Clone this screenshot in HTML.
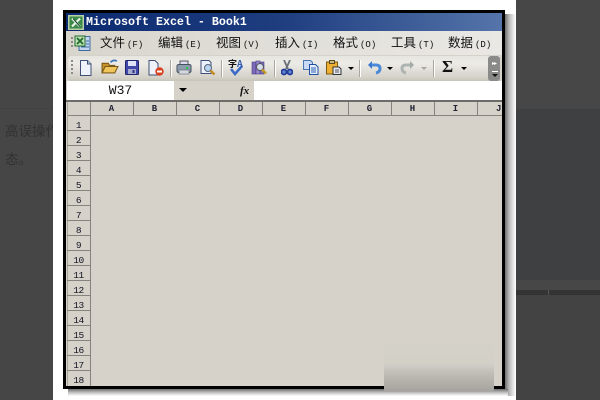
<!DOCTYPE html>
<html><head><meta charset="utf-8">
<style>
html,body{margin:0;padding:0;width:600px;height:400px;overflow:hidden;background:#454545}
div,span,svg{position:absolute}
body{font-family:"Liberation Sans","Noto Sans CJK SC",sans-serif}
.m{top:34px;font:12.500px/18px "Liberation Serif","Noto Sans CJK SC",sans-serif;color:#111;white-space:nowrap}
.m i{font:9px/18px "Liberation Mono",monospace;font-style:normal;margin-left:2px}
.c{top:102px;height:14px;width:43px;text-align:center;font:bold 9px/15px "Liberation Mono",monospace;color:#223;}
.cl{top:102px;width:1px;height:14px;background:#85837d}
.r{left:67px;width:23px;height:14px;border-bottom:1px solid #85837d;text-align:center;font:9.500px/20px "Liberation Mono",monospace;letter-spacing:-.5px;color:#112;overflow:hidden}
.s{top:60px;width:1px;height:17px;background:#a9a79f;border-right:1px solid #fff}
.a{top:67px;width:0;height:0;border-left:3px solid transparent;border-right:3px solid transparent;border-top:3px solid #000}
.g{width:2px;height:2px;background:#8c8a84}
</style></head><body>
<!-- background -->
<div style="left:0;top:0;width:53px;height:400px;background:#464646"></div>
<div style="left:0;top:108px;width:53px;height:1px;background:#424242"></div>
<div style="left:5px;top:123px;width:48px;height:18px;overflow:hidden;font-size:13.500px;line-height:18px;color:#313131;white-space:nowrap">高误操作</div>
<div style="left:5px;top:151px;width:30px;height:18px;overflow:hidden;font-size:13.500px;line-height:18px;color:#313131;white-space:nowrap">态。</div>
<div style="left:516px;top:0;width:84px;height:109px;background:#474747"></div>
<div style="left:516px;top:109px;width:84px;height:171px;background:#3f4042"></div>
<div style="left:516px;top:280px;width:84px;height:10px;background:#474747"></div>
<div style="left:516px;top:290px;width:84px;height:5px;background:#343434"></div>
<div style="left:548px;top:290px;width:1px;height:5px;background:#555"></div>
<div style="left:516px;top:295px;width:84px;height:105px;background:#434343"></div>
<!-- white panel -->
<div style="left:53px;top:0;width:463px;height:400px;background:#fff"></div>
<!-- shadows -->
<div style="left:505px;top:14px;width:11px;height:382px;background:linear-gradient(90deg,#6e6e6e,#b5b5b5 35%,#f2f2f2 85%,#fff)"></div>
<div style="left:68px;top:389px;width:440px;height:7px;background:linear-gradient(180deg,#6e6e6e,#c0c0c0 50%,#fff)"></div>
<!-- window -->
<div style="left:63px;top:10px;width:442px;height:379px;background:#000"></div>
<div style="left:66px;top:13px;width:436px;height:373px;background:#d6d2ca;overflow:hidden"></div>
<!-- title -->
<div style="left:66px;top:13px;width:436px;height:18px;background:linear-gradient(90deg,#0c2a70,#1e3e80 50%,#5474aa)"></div>
<svg style="left:68px;top:15px" width="16" height="15" viewBox="0 0 16 15"><rect width="16" height="15" fill="#b8d0a8"/><rect x="1.500" y="1.500" width="13" height="12" fill="#3d8a48"/><path d="M4 3.500l8 8M12 3.500l-8 8" stroke="#eef6ea" stroke-width="2.200"/><path d="M5 3.500l7 8" stroke="#143" stroke-width="1"/></svg>
<div style="left:86px;top:14px;font:bold 11.670px/17px 'Liberation Mono',monospace;color:#fff;white-space:pre">Microsoft Excel - Book1</div>
<!-- menu -->
<div style="left:66px;top:31px;width:436px;height:24px;background:linear-gradient(90deg,#d8d5cd,#e9e8e4)"></div>
<div class="g" style="left:71px;top:37px"></div><div class="g" style="left:71px;top:41px"></div><div class="g" style="left:71px;top:45px"></div>
<svg style="left:74px;top:35px" width="18" height="17" viewBox="0 0 18 17"><path d="M5 1.500h11v14H5z" fill="#c4d6ee" stroke="#3d6aa0"/><rect x="1" y="1" width="10" height="10" fill="#bfe0b4" stroke="#1f6a2c"/><path d="M3 3l6 6M9 3l-6 6" stroke="#1f6a2c" stroke-width="1.800"/><path d="M12 6h3M12 9h3M7 12h8" stroke="#3c6ca8"/></svg>
<div class="m" style="left:100px">文件<i>(F)</i></div>
<div class="m" style="left:158px">编辑<i>(E)</i></div>
<div class="m" style="left:216px">视图<i>(V)</i></div>
<div class="m" style="left:275px">插入<i>(I)</i></div>
<div class="m" style="left:333px">格式<i>(O)</i></div>
<div class="m" style="left:391px">工具<i>(T)</i></div>
<div class="m" style="left:448px">数据<i>(D)</i></div>
<!-- toolbar -->
<div style="left:68px;top:56px;width:432px;height:25px;border-radius:3px 0 0 3px;background:linear-gradient(180deg,#e6e5df,#ecebe6 30%,#d4d2c9 85%,#c6c3b9)"></div>
<div class="g" style="left:71px;top:60px"></div><div class="g" style="left:71px;top:64px"></div><div class="g" style="left:71px;top:68px"></div><div class="g" style="left:71px;top:72px"></div>
<svg style="left:79px;top:60px" width="13" height="16" viewBox="0 0 12 16"><path d="M1 .5h7l3.500 3.500v11.500H1z" fill="#eef2fa" stroke="#3f4f78"/><path d="M8 .5v3.500h3.500" fill="#b8c6e0" stroke="#3f4f78"/></svg>
<svg style="left:101px;top:58px" width="18" height="17" viewBox="0 0 17 16"><path d="M1 5h6l1 2h5v7H1z" fill="#c8922a" stroke="#7a5a18"/><path d="M1 14l3-6h12l-3 6z" fill="#f0c65c" stroke="#7a5a18"/><path d="M9 4q3-3 6-1" fill="none" stroke="#3c74b8" stroke-width="1.600"/></svg>
<svg style="left:125px;top:60px" width="14" height="15" viewBox="0 0 14 15"><rect x=".5" y=".5" width="13" height="14" rx="1" fill="#4048a8" stroke="#20246a"/><rect x="3" y="1" width="8" height="5" fill="#dfe4f6"/><rect x="3" y="9" width="8" height="5" fill="#a8add0"/><rect x="7.500" y="10" width="2" height="3" fill="#2c3080"/></svg>
<svg style="left:148px;top:60px" width="16" height="16" viewBox="0 0 16 16"><path d="M1 .5h6l3 3v11.500H1z" fill="#eef2fa" stroke="#3f4f78"/><circle cx="11.500" cy="11.500" r="4.200" fill="#d8401e"/><rect x="9" y="10.500" width="5" height="2" fill="#fff"/></svg>
<div class="s" style="left:170px"></div>
<svg style="left:176px;top:60px" width="16" height="15" viewBox="0 0 16 15"><path d="M4 1h8v4H4z" fill="#dde" stroke="#556"/><path d="M1 6q0-1.500 2-1.500h10q2 0 2 1.500v5q0 1.500-2 1.500H3q-2 0-2-1.500z" fill="#8e9cae" stroke="#445060"/><rect x="3" y="10" width="10" height="4" fill="#d4d9e0" stroke="#5a6470" stroke-width=".6"/><rect x="10" y="7" width="2" height="2" fill="#22cc44"/></svg>
<svg style="left:200px;top:60px" width="16" height="16" viewBox="0 0 16 16"><path d="M1 .5h8l2 2v11H1z" fill="#eef2fa" stroke="#3f4f78"/><circle cx="8" cy="8" r="3.500" fill="#b8d4ee" stroke="#55657a"/><path d="M10.500 10.500l4 4" stroke="#c88a20" stroke-width="2.400"/></svg>
<div class="s" style="left:221px"></div>
<svg style="left:228px;top:59px" width="16" height="18" viewBox="0 0 16 18"><path d="M3 10l4 5 7-8" fill="none" stroke="#3c6cc8" stroke-width="2.600"/></svg>
<div style="left:228px;top:58px;font:bold 9px/11px 'Noto Sans CJK SC',sans-serif;color:#111">字<span style="position:static;color:#335ca8">A</span></div>
<svg style="left:251px;top:59px" width="16" height="17" viewBox="0 0 16 17"><rect x="1" y="3" width="4" height="12" fill="#7a6cb8" stroke="#4a3c80" stroke-width=".6"/><rect x="5" y="2" width="4" height="13" fill="#9888cc" stroke="#4a3c80" stroke-width=".6"/><rect x="9" y="3" width="4" height="12" fill="#7a6cb8" stroke="#4a3c80" stroke-width=".6"/><circle cx="9" cy="8" r="3.500" fill="#d4dee8" stroke="#556"/><path d="M11 10.500l4 4" stroke="#c89a20" stroke-width="2.400"/></svg>
<div class="s" style="left:274px"></div>
<svg style="left:281px;top:60px" width="12" height="16" viewBox="0 0 12 16"><path d="M3 0l4 9M9 0L5 9" stroke="#6a7078" stroke-width="1.800"/><circle cx="3" cy="12" r="2.500" fill="#6b86d0" stroke="#1f3c98" stroke-width="1.800"/><circle cx="9" cy="12" r="2.500" fill="#6b86d0" stroke="#1f3c98" stroke-width="1.800"/></svg>
<svg style="left:303px;top:60px" width="16" height="15" viewBox="0 0 16 15"><path d="M.5.500h7l2 2v7H.5z" fill="#c8daf4" stroke="#4a74b4"/><path d="M6.500 4.500h6l2.500 2.500v7.500H6.500z" fill="#e6eefa" stroke="#2050a0"/><path d="M8 8h5M8 10h5M8 12h5" stroke="#2f60b8"/></svg>
<svg style="left:326px;top:60px" width="16" height="15" viewBox="0 0 16 15"><rect x=".5" y="2" width="11" height="12" fill="#eeb030" stroke="#7a5a18"/><rect x="3.500" y=".5" width="5" height="3" fill="#c8b880" stroke="#5a4a20"/><path d="M7 7h6l2 2v5.500H7z" fill="#e4e8ee" stroke="#333"/><path d="M9 10h4M9 12h4" stroke="#556"/></svg>
<div class="a" style="left:348px"></div>
<div class="s" style="left:359px"></div>
<svg style="left:367px;top:60px" width="15" height="15" viewBox="0 0 15 15"><path d="M4 5h5q4 0 4 3.500T9 13" fill="none" stroke="#4a8ad8" stroke-width="3"/><path d="M5 1v8L1 5z" fill="#3c7ad0"/></svg>
<div class="a" style="left:387px"></div>
<svg style="left:400px;top:60px" width="15" height="15" viewBox="0 0 15 15"><path d="M11 5H6Q2 5 2 8.500T6 13" fill="none" stroke="#aeb4b2" stroke-width="3"/><path d="M10 1v8l4-4z" fill="#a4aaa8"/></svg>
<div class="a" style="left:421px;border-top-color:#a8a6a0"></div>
<div class="s" style="left:433px"></div>
<div style="left:442px;top:57px;font:bold 17px/20px 'Liberation Serif',serif;color:#111">Σ</div>
<div class="a" style="left:461px"></div>
<div style="left:488px;top:56px;width:12px;height:25px;border-radius:3px;background:#8a8a88"></div>
<div style="left:492px;top:61px;font:6px/6px 'Liberation Sans',sans-serif;color:#fff;letter-spacing:-1px">▸▸</div>
<div style="left:492px;top:71px;width:6px;height:1px;background:#fff"></div>
<div class="a" style="left:492px;top:74px;border-top-color:#111"></div>
<!-- formula bar -->
<div style="left:66px;top:81px;width:436px;height:20px;background:#d6d2ca"></div>
<div style="left:67px;top:81px;width:107px;height:19px;background:#fff;text-align:center;font:13px/19px 'Liberation Mono',monospace;color:#111">W37</div>
<div class="a" style="left:179px;top:88px;border-left-width:4px;border-right-width:4px;border-top-width:4px"></div>
<div style="left:240px;top:82px;font:italic bold 11px/18px 'Liberation Serif',serif;color:#111">fx</div>
<div style="left:254px;top:81px;width:248px;height:19px;background:#fff"></div>
<!-- grid header -->
<div style="left:66px;top:100px;width:436px;height:2px;background:#6e6c68"></div>
<div style="left:67px;top:115px;width:435px;height:1px;background:#85837d"></div>
<div style="left:67px;top:102px;width:1px;height:284px;background:#aaa89f"></div>
<div style="left:90px;top:102px;width:1px;height:284px;background:#85837d"></div>
<div class="cl" style="left:133px"></div><div class="cl" style="left:176px"></div><div class="cl" style="left:219px"></div><div class="cl" style="left:262px"></div><div class="cl" style="left:305px"></div><div class="cl" style="left:348px"></div><div class="cl" style="left:391px"></div><div class="cl" style="left:434px"></div><div class="cl" style="left:477px"></div>
<div class="c" style="left:90px">A</div><div class="c" style="left:133px">B</div><div class="c" style="left:176px">C</div><div class="c" style="left:219px">D</div><div class="c" style="left:262px">E</div><div class="c" style="left:305px">F</div><div class="c" style="left:348px">G</div><div class="c" style="left:391px">H</div><div class="c" style="left:434px">I</div>
<div class="c" style="left:477px;width:25px;overflow:hidden;text-align:left;text-indent:19px">J</div>
<!-- rows -->
<div class="r" style="top:116px">1</div><div class="r" style="top:131px">2</div><div class="r" style="top:146px">3</div><div class="r" style="top:161px">4</div><div class="r" style="top:176px">5</div><div class="r" style="top:191px">6</div><div class="r" style="top:206px">7</div><div class="r" style="top:221px">8</div><div class="r" style="top:236px">9</div><div class="r" style="top:251px">10</div><div class="r" style="top:266px">11</div><div class="r" style="top:281px">12</div><div class="r" style="top:296px">13</div><div class="r" style="top:311px">14</div><div class="r" style="top:326px">15</div><div class="r" style="top:341px">16</div><div class="r" style="top:356px">17</div><div class="r" style="top:371px;height:15px;border-bottom:0">18</div>
<!-- smudge -->
<div style="left:384px;top:335px;width:110px;height:56px;background:linear-gradient(180deg,#d6d2ca,#d3d0c8 50%,#bcbab3 72%,#a6a49e)"></div>
</body></html>
